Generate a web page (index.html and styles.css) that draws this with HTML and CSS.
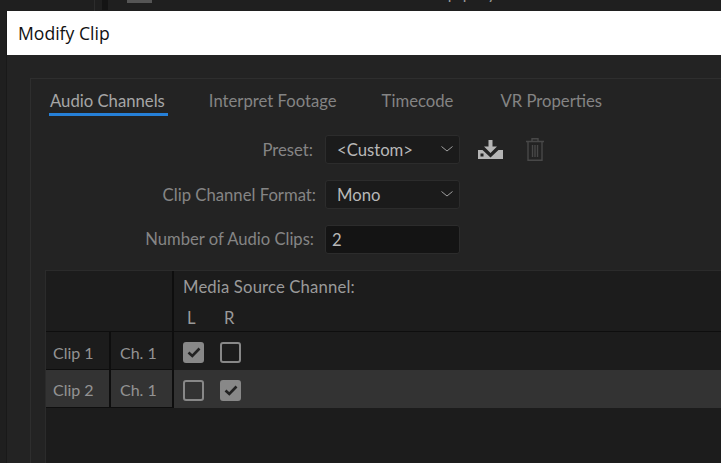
FILE: index.html
```html
<!DOCTYPE html>
<html lang="en">
<head>
<meta charset="utf-8">
<title>Modify Clip</title>
<link rel="stylesheet" href="styles.css">
</head>
<body>
<div class="backdrop">
  <span class="bd-line"></span>
  <span class="bd-rule"></span>
  <span class="bd-check"></span>
  <span class="bd-text">Apply</span>
</div>
<div class="dialog">
  <div class="titlebar">Modify Clip</div>
  <div class="dialog-body">
    <div class="panel">
      <div class="tabs">
        <div class="tab active">Audio Channels</div>
        <div class="tab">Interpret Footage</div>
        <div class="tab">Timecode</div>
        <div class="tab tab-last">VR Properties</div>
      </div>
      <div class="form">
        <div class="form-row">
          <label class="form-label">Preset:</label>
          <div class="select">&lt;Custom&gt;<svg class="chev" viewBox="0 0 12 6"><path d="M.5.5l5.500 4.500L11.500.5"/></svg></div>
          <svg class="icon-save" viewBox="0 0 25 19"><path d="M10.500 0h4v6.500h4.500l-6.500 6.500L6 6.500h4.500z"/><path d="M0 10h4.500l8 7.500 8-7.500H25v9H0z"/><rect class="hole" x="2.500" y="13.500" width="3" height="3"/></svg>
          <svg class="icon-trash" viewBox="0 0 18 23"><path d="M0 3.500h18M6 3V.7h6V3M2 4v18.300h14V4M6.500 7v12M9 7v12M11.500 7v12"/></svg>
        </div>
        <div class="form-row">
          <label class="form-label form-label-wide">Clip Channel Format:</label>
          <div class="select">Mono<svg class="chev" viewBox="0 0 12 6"><path d="M.5.5l5.500 4.500L11.500.5"/></svg></div>
        </div>
        <div class="form-row">
          <label class="form-label form-label-clips">Number of Audio Clips:</label>
          <div class="input">2</div>
        </div>
      </div>
      <div class="matrix">
        <div class="m-head">
          <div class="m-head-blank"></div>
          <div class="m-head-main">
            <div class="m-title">Media Source Channel:</div>
            <div class="m-channels"><span class="m-ch">L</span><span class="m-ch">R</span></div>
          </div>
        </div>
        <div class="m-row">
          <div class="m-clip">Clip 1</div>
          <div class="m-chan">Ch. 1</div>
          <div class="m-checks">
            <span class="cb on"><svg viewBox="0 0 14 11"><path d="M1.500 5.500l3.800 3.500L12.500 1.500"/></svg></span>
            <span class="cb"></span>
          </div>
        </div>
        <div class="m-row alt">
          <div class="m-clip">Clip 2</div>
          <div class="m-chan">Ch. 1</div>
          <div class="m-checks">
            <span class="cb"></span>
            <span class="cb on"><svg viewBox="0 0 14 11"><path d="M1.500 5.500l3.800 3.500L12.500 1.500"/></svg></span>
          </div>
        </div>
      </div>
    </div>
  </div>
</div>
</body>
</html>
```
FILE: styles.css
```css
* { box-sizing: border-box; }
html, body { margin: 0; height: 100%; }
body {
  width: 721px;
  height: 463px;
  overflow: hidden;
  background: #1f1f1f;
  font-family: Lato, "Open Sans", sans-serif;
  font-size: 16.700px;
  color: #9a9a9a;
}
.backdrop {
  height: 11px;
  background: #1f1f1f;
  position: relative;
  overflow: hidden;
}
.bd-line { position: absolute; left: 94px; top: 0; width: 1px; height: 11px; background: #2c2c2c; }
.bd-rule { position: absolute; left: 102px; top: 0; width: 6px; height: 10px; background: #141414; }
.bd-check { position: absolute; left: 127px; top: -20px; width: 25px; height: 23px; background: #555; }
.bd-text { position: absolute; left: 431px; top: -17px; color: #999; font-size: 16px; letter-spacing: 6px; }
.dialog { margin-left: 6px; border-left: 1px solid #191919; }
.titlebar {
  height: 44px;
  background: #fff;
  color: #111;
  font-family: "Open Sans", sans-serif;
  font-size: 17.600px;
  line-height: 45px;
  padding-left: 11px;
}
.dialog-body {
  height: 408px;
  background: #232323;
  padding: 23px 0 0 23px;
}
.panel {
  height: 385px;
  border-top: 1px solid #2e2e2e;
  border-left: 1px solid #2e2e2e;
  padding: 11px 0 0 14px;
}
.tabs { display: flex; gap: 45px; height: 26px; padding-left: 5px; }
.tab { line-height: 22px; color: #848484; height: 26px; white-space: nowrap; }
.tab.active { color: #a6a6a6; border-bottom: 3px solid #2680d8; margin: 0 -4px 0 -1px; padding: 0 3px 0 1px; }
.tab-last { margin-left: 2px; }
.form { display: flex; flex-direction: column; gap: 16px; margin-top: 19px; }
.form-row { display: flex; align-items: center; height: 29px; }
.form-label { width: 280px; text-align: right; padding-right: 12px; line-height: 30px; color: #858585; white-space: nowrap; }
.form-label-wide { padding-right: 9px; }
.form-label-clips { padding-right: 11px; font-size: 16.600px; line-height: 31px; }
.select, .input {
  width: 135px;
  height: 29px;
  background: #1b1b1b;
  border: 1px solid #2c2c2c;
  border-radius: 3px;
  color: #b8b8b8;
  line-height: 28px;
  padding-left: 11px;
  position: relative;
}
.input { background: #141414; padding-left: 6px; }
.chev { position: absolute; right: 6px; top: 10px; width: 12px; height: 6px; fill: none; stroke: #a0a0a0; stroke-width: 1; }
.icon-save { width: 25px; height: 19px; margin-left: 18px; fill: #b5b5b5; }
.icon-save .hole { fill: #232323; }
.icon-trash { width: 18px; height: 23px; margin-left: 23px; fill: none; stroke: #484848; stroke-width: 1.400; }
.matrix {
  margin: 16px 0 0 0;
  height: 193px;
  background: #1c1c1c;
  border-top: 1px solid #2b2b2b;
  border-left: 1px solid #2b2b2b;
}
.m-head { display: flex; height: 61px; border-bottom: 1px solid #0e0e0e; }
.m-head-blank { width: 128px; border-right: 2px solid #0e0e0e; }
.m-head-main { padding: 4px 0 0 9px; }
.m-title { line-height: 24px; color: #9a9a9a; white-space: nowrap; letter-spacing: .15px; }
.m-channels { display: flex; margin-top: 9px; padding-left: 4px; gap: 27px; line-height: 20px; }
.m-ch { width: 10px; }
.m-row { display: flex; height: 38px; }
.m-row.alt { background: #333; }
.m-clip, .m-chan { font-size: 16px; line-height: 41px; height: 38px; overflow: hidden; color: #939393; white-space: nowrap; border-bottom: 1px solid #0e0e0e; }
.m-row.alt .m-clip, .m-row.alt .m-chan { line-height: 39px; }
.m-clip { width: 65px; padding-left: 7px; border-right: 2px solid #0e0e0e; }
.m-chan { width: 63px; padding-left: 9px; border-right: 2px solid #0e0e0e; }
.m-checks { display: flex; gap: 16px; padding: 10px 0 0 9px; }
.cb {
  width: 21px;
  height: 21px;
  border: 2px solid #888;
  border-radius: 3px;
  display: flex;
  align-items: center;
  justify-content: center;
}
.cb.on { background: #888; }
.cb svg { width: 14px; height: 11px; flex: none; fill: none; stroke: #222; stroke-width: 2.600; }
```
